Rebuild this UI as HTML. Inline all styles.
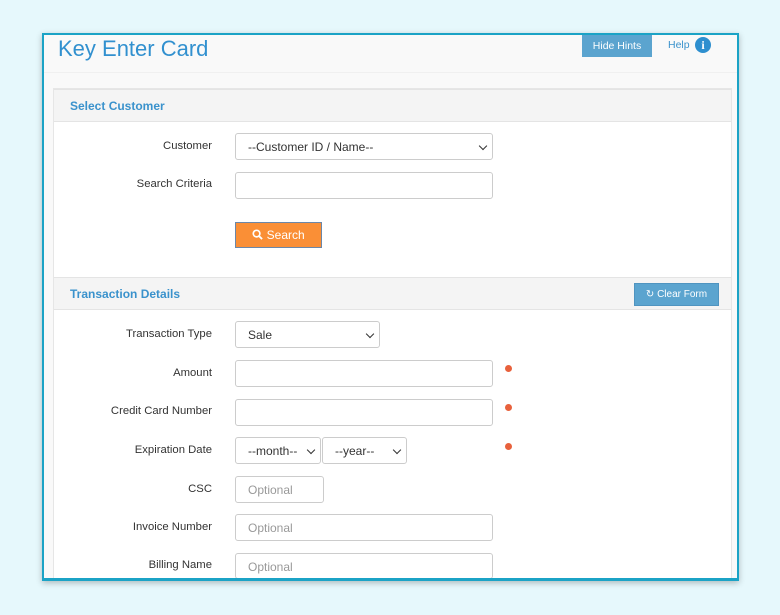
<!DOCTYPE html>
<html><head><style>
*{margin:0;padding:0;box-sizing:border-box}
body{width:780px;height:615px;background:#e6f8fc;font-family:"Liberation Sans",sans-serif;position:relative;overflow:hidden}
.frame{position:absolute;left:42px;top:33px;width:697px;height:548px;border:2px solid #1ba3c6;background:#f9f9f9;overflow:hidden;box-shadow:0 2px 6px rgba(0,0,0,.25)}
.a{position:absolute}
.title{left:14px;top:1px;font-size:22px;color:#3190cf}
.panel{left:9px;top:53px;width:679px;height:500px;background:#fff;border:1px solid #e6e6e6}
.hdr{position:absolute;left:0;width:100%;height:33px;background:#f4f4f4;border-top:1px solid #e4e4e4;border-bottom:1px solid #e4e4e4}
.hdr span{position:absolute;left:16px;top:9px;font-size:12px;font-weight:bold;color:#3a92cc}
.lbl{position:absolute;width:200px;text-align:right;font-size:11.3px;line-height:15px;color:#333;margin-top:-1px}
.in{position:absolute;height:27px;border:1px solid #ccc;border-radius:3px;background:#fff;font-size:12px;color:#333;padding:6px 12px}
.ph{color:#999}
.sel:after{content:"";position:absolute;right:6px;top:9px;width:5px;height:5px;border-right:1.5px solid #333;border-bottom:1.5px solid #333;transform:rotate(45deg)}
.dot{position:absolute;width:7px;height:7px;border-radius:50%;background:#e8613c}
</style></head><body>
<div class="frame">
<div class="a title">Key Enter Card</div>
<div class="a" style="left:538px;top:0;width:70px;height:22px;background:#5ba4cf;color:#fff;font-size:10.5px;text-align:center;line-height:22px">Hide Hints</div>
<div class="a" style="left:624px;top:4px;font-size:10.5px;color:#3a92cc">Help</div>
<div class="a" style="left:651px;top:2px;width:16px;height:16px;border-radius:50%;background:#2e8fcf;color:#fff;font-size:12px;font-weight:bold;text-align:center;line-height:16px;font-family:'Liberation Serif',serif">i</div>
<div class="a" style="left:0;top:37px;width:100%;height:1px;background:#f0f0f0"></div>
<div class="a panel">
<div class="hdr" style="top:0"><span>Select Customer</span></div>
<div class="hdr" style="top:188px"><span>Transaction Details</span>
<div class="a" style="left:580px;top:5px;width:85px;height:23px;background:#5ba4cf;border:1px solid #4f94c0;color:#fff;font-size:10px;text-align:center;line-height:21px">&#x21bb; Clear Form</div></div>
</div>
</div>
<div class="lbl" style="left:12px;top:140px">Customer</div>
<div class="in sel" style="left:235px;top:133px;width:258px">--Customer ID / Name--</div>
<div class="lbl" style="left:12px;top:178px">Search Criteria</div>
<div class="in" style="left:235px;top:172px;width:258px"></div>
<div class="a" style="left:235px;top:222px;width:87px;height:26px;background:#fa8f36;border:1px solid #6b87a8;color:#fff;font-size:12px;text-align:center;line-height:24px"><svg width="11" height="11" viewBox="0 0 12 12" style="vertical-align:-1px"><circle cx="5" cy="5" r="3.6" fill="none" stroke="#fff" stroke-width="1.8"/><path d="M7.6 7.6L11 11" stroke="#fff" stroke-width="2"/></svg> Search</div>
<div class="lbl" style="left:12px;top:328px">Transaction Type</div>
<div class="in sel" style="left:235px;top:321px;width:145px">Sale</div>
<div class="lbl" style="left:12px;top:367px">Amount</div>
<div class="in" style="left:235px;top:360px;width:258px"></div>
<div class="dot" style="left:505px;top:365px"></div>
<div class="lbl" style="left:12px;top:405px">Credit Card Number</div>
<div class="in" style="left:235px;top:399px;width:258px"></div>
<div class="dot" style="left:505px;top:404px"></div>
<div class="lbl" style="left:12px;top:444px">Expiration Date</div>
<div class="in sel" style="left:235px;top:437px;width:86px">--month--</div>
<div class="in sel" style="left:322px;top:437px;width:85px">--year--</div>
<div class="dot" style="left:505px;top:443px"></div>
<div class="lbl" style="left:12px;top:483px">CSC</div>
<div class="in ph" style="left:235px;top:476px;width:89px">Optional</div>
<div class="lbl" style="left:12px;top:521px">Invoice Number</div>
<div class="in ph" style="left:235px;top:514px;width:258px">Optional</div>
<div class="lbl" style="left:12px;top:559px">Billing Name</div>
<div class="in ph" style="left:235px;top:553px;width:258px;height:26px">Optional</div>
<div class="a" style="left:42px;top:578px;width:697px;height:3px;background:#1ba3c6"></div>
</body></html>
